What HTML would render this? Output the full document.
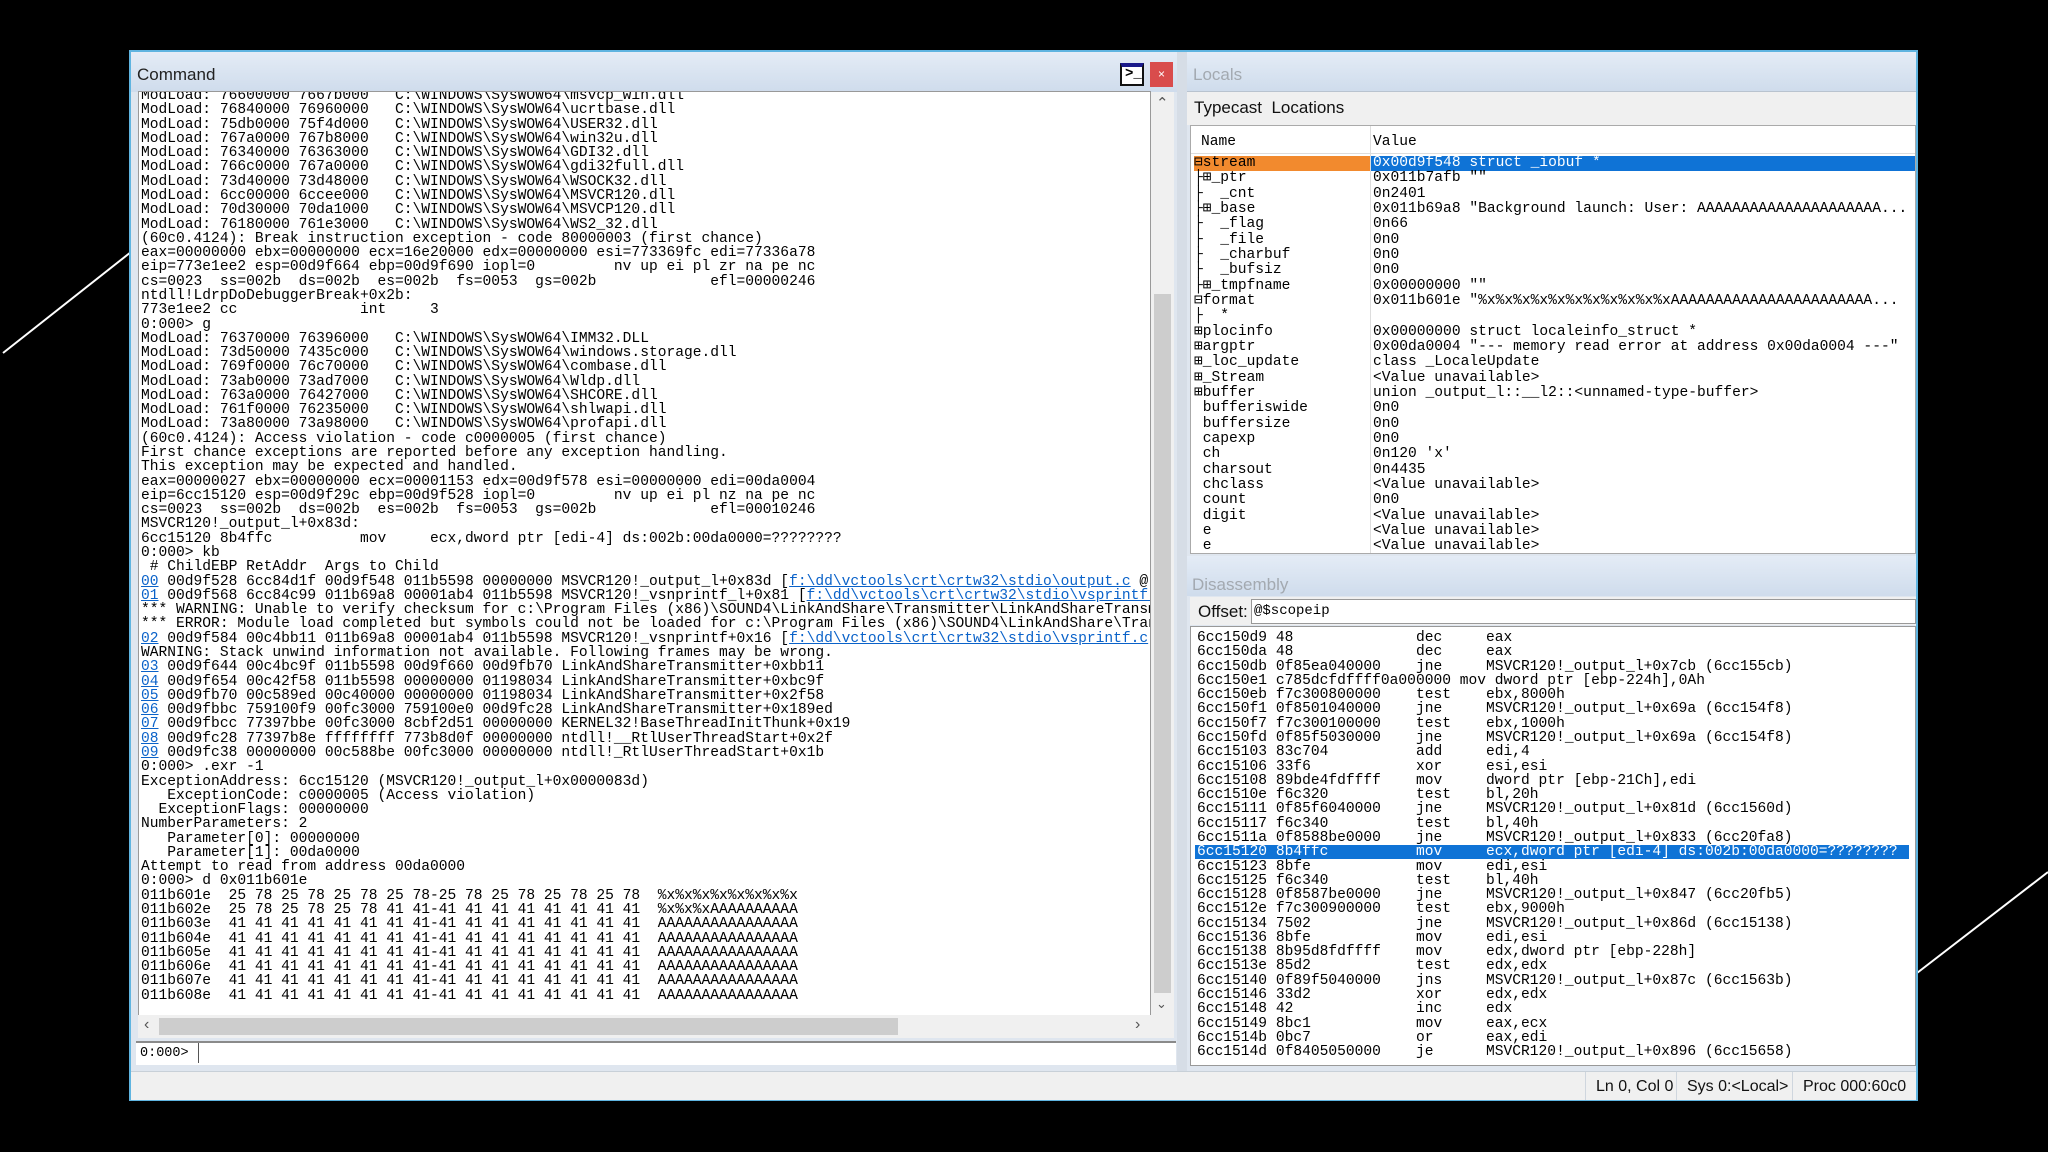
<!DOCTYPE html>
<html><head><meta charset="utf-8">
<style>
*{margin:0;padding:0;box-sizing:border-box}
body{width:2048px;height:1152px;background:#000;position:relative;overflow:hidden;font-family:"Liberation Sans",sans-serif}
.abs{position:absolute}
.mono{font-family:"Liberation Mono",monospace;font-size:14.6px;white-space:pre;color:#000}
.win{left:129px;top:50px;width:1789px;height:1051px;background:#dfe6ef;border:2px solid #5fb4e0}
.tb{background:linear-gradient(#e4ecf6,#cfdcec)}
a{color:#0a62c9;text-decoration:underline}
.st{position:absolute;top:0;height:28px;border-left:1px solid #cfd6de;padding:0 10px;line-height:30px;font-size:16px;color:#111}
</style></head><body>
<svg class="abs" style="left:0;top:0" width="2048" height="1152"><line x1="3" y1="353" x2="131" y2="252" stroke="#fff" stroke-width="2"/><line x1="1917" y1="973" x2="2048" y2="872" stroke="#fff" stroke-width="2"/></svg>
<div class="abs win"></div>
<div class="abs tb" style="left:131px;top:52px;width:1046px;height:40px"></div>
<div class="abs" style="left:137px;top:65px;font-size:17px;color:#222">Command</div>
<div class="abs" style="left:1120px;top:63px;width:24px;height:23px;background:#fff;border:2px solid #111;border-top:4px solid #1a1a8a"></div>
<div class="abs" style="left:1125px;top:66px;font-family:'Liberation Mono',monospace;font-size:14px;font-weight:bold;color:#000">&gt;_</div>
<div class="abs" style="left:1150px;top:62px;width:23px;height:25px;background:#d94c4c;color:#fff;font-size:12px;text-align:center;line-height:25px">×</div>
<div class="abs" style="left:138px;top:91px;width:1013px;height:925px;background:#fff;border:1px solid #999;overflow:hidden">
<div class="abs mono" style="left:2px;top:-3px;line-height:14.28px">ModLoad: 76600000 7667b000   C:\WINDOWS\SysWOW64\msvcp_win.dll
ModLoad: 76840000 76960000   C:\WINDOWS\SysWOW64\ucrtbase.dll
ModLoad: 75db0000 75f4d000   C:\WINDOWS\SysWOW64\USER32.dll
ModLoad: 767a0000 767b8000   C:\WINDOWS\SysWOW64\win32u.dll
ModLoad: 76340000 76363000   C:\WINDOWS\SysWOW64\GDI32.dll
ModLoad: 766c0000 767a0000   C:\WINDOWS\SysWOW64\gdi32full.dll
ModLoad: 73d40000 73d48000   C:\WINDOWS\SysWOW64\WSOCK32.dll
ModLoad: 6cc00000 6ccee000   C:\WINDOWS\SysWOW64\MSVCR120.dll
ModLoad: 70d30000 70da1000   C:\WINDOWS\SysWOW64\MSVCP120.dll
ModLoad: 76180000 761e3000   C:\WINDOWS\SysWOW64\WS2_32.dll
(60c0.4124): Break instruction exception - code 80000003 (first chance)
eax=00000000 ebx=00000000 ecx=16e20000 edx=00000000 esi=773369fc edi=77336a78
eip=773e1ee2 esp=00d9f664 ebp=00d9f690 iopl=0         nv up ei pl zr na pe nc
cs=0023  ss=002b  ds=002b  es=002b  fs=0053  gs=002b             efl=00000246
ntdll!LdrpDoDebuggerBreak+0x2b:
773e1ee2 cc              int     3
0:000> g
ModLoad: 76370000 76396000   C:\WINDOWS\SysWOW64\IMM32.DLL
ModLoad: 73d50000 7435c000   C:\WINDOWS\SysWOW64\windows.storage.dll
ModLoad: 769f0000 76c70000   C:\WINDOWS\SysWOW64\combase.dll
ModLoad: 73ab0000 73ad7000   C:\WINDOWS\SysWOW64\Wldp.dll
ModLoad: 763a0000 76427000   C:\WINDOWS\SysWOW64\SHCORE.dll
ModLoad: 761f0000 76235000   C:\WINDOWS\SysWOW64\shlwapi.dll
ModLoad: 73a80000 73a98000   C:\WINDOWS\SysWOW64\profapi.dll
(60c0.4124): Access violation - code c0000005 (first chance)
First chance exceptions are reported before any exception handling.
This exception may be expected and handled.
eax=00000027 ebx=00000000 ecx=00001153 edx=00d9f578 esi=00000000 edi=00da0004
eip=6cc15120 esp=00d9f29c ebp=00d9f528 iopl=0         nv up ei pl nz na pe nc
cs=0023  ss=002b  ds=002b  es=002b  fs=0053  gs=002b             efl=00010246
MSVCR120!_output_l+0x83d:
6cc15120 8b4ffc          mov     ecx,dword ptr [edi-4] ds:002b:00da0000=????????
0:000> kb
 # ChildEBP RetAddr  Args to Child
<a>00</a> 00d9f528 6cc84d1f 00d9f548 011b5598 00000000 MSVCR120!_output_l+0x83d [<a>f:\dd\vctools\crt\crtw32\stdio\output.c</a> @ 1649]
<a>01</a> 00d9f568 6cc84c99 011b69a8 00001ab4 011b5598 MSVCR120!_vsnprintf_l+0x81 [<a>f:\dd\vctools\crt\crtw32\stdio\vsprintf.c</a> @ 139]
*** WARNING: Unable to verify checksum for c:\Program Files (x86)\SOUND4\LinkAndShare\Transmitter\LinkAndShareTransmitter.exe
*** ERROR: Module load completed but symbols could not be loaded for c:\Program Files (x86)\SOUND4\LinkAndShare\Transmitter
<a>02</a> 00d9f584 00c4bb11 011b69a8 00001ab4 011b5598 MSVCR120!_vsnprintf+0x16 [<a>f:\dd\vctools\crt\crtw32\stdio\vsprintf.c</a> @ 190]
WARNING: Stack unwind information not available. Following frames may be wrong.
<a>03</a> 00d9f644 00c4bc9f 011b5598 00d9f660 00d9fb70 LinkAndShareTransmitter+0xbb11
<a>04</a> 00d9f654 00c42f58 011b5598 00000000 01198034 LinkAndShareTransmitter+0xbc9f
<a>05</a> 00d9fb70 00c589ed 00c40000 00000000 01198034 LinkAndShareTransmitter+0x2f58
<a>06</a> 00d9fbbc 759100f9 00fc3000 759100e0 00d9fc28 LinkAndShareTransmitter+0x189ed
<a>07</a> 00d9fbcc 77397bbe 00fc3000 8cbf2d51 00000000 KERNEL32!BaseThreadInitThunk+0x19
<a>08</a> 00d9fc28 77397b8e ffffffff 773b8d0f 00000000 ntdll!__RtlUserThreadStart+0x2f
<a>09</a> 00d9fc38 00000000 00c588be 00fc3000 00000000 ntdll!_RtlUserThreadStart+0x1b
0:000> .exr -1
ExceptionAddress: 6cc15120 (MSVCR120!_output_l+0x0000083d)
   ExceptionCode: c0000005 (Access violation)
  ExceptionFlags: 00000000
NumberParameters: 2
   Parameter[0]: 00000000
   Parameter[1]: 00da0000
Attempt to read from address 00da0000
0:000> d 0x011b601e
011b601e  25 78 25 78 25 78 25 78-25 78 25 78 25 78 25 78  %x%x%x%x%x%x%x%x
011b602e  25 78 25 78 25 78 41 41-41 41 41 41 41 41 41 41  %x%x%xAAAAAAAAAA
011b603e  41 41 41 41 41 41 41 41-41 41 41 41 41 41 41 41  AAAAAAAAAAAAAAAA
011b604e  41 41 41 41 41 41 41 41-41 41 41 41 41 41 41 41  AAAAAAAAAAAAAAAA
011b605e  41 41 41 41 41 41 41 41-41 41 41 41 41 41 41 41  AAAAAAAAAAAAAAAA
011b606e  41 41 41 41 41 41 41 41-41 41 41 41 41 41 41 41  AAAAAAAAAAAAAAAA
011b607e  41 41 41 41 41 41 41 41-41 41 41 41 41 41 41 41  AAAAAAAAAAAAAAAA
011b608e  41 41 41 41 41 41 41 41-41 41 41 41 41 41 41 41  AAAAAAAAAAAAAAAA</div>
<div class="abs" style="left:1011px;top:0;width:2px;height:925px;background:#fff"></div>
</div>
<div class="abs" style="left:1151px;top:92px;width:23px;height:923px;background:#f0f0f0"></div>
<div class="abs" style="left:1154px;top:294px;width:17px;height:699px;background:#cdcdcd"></div>
<div class="abs" style="left:1156px;top:94px;font-size:15px;color:#555">&#8963;</div>
<div class="abs" style="left:1156px;top:996px;font-size:13px;color:#555">&#8964;</div>
<div class="abs" style="left:138px;top:1015px;width:1036px;height:23px;background:#f0f0f0"></div>
<div class="abs" style="left:159px;top:1018px;width:739px;height:17px;background:#cdcdcd"></div>
<div class="abs" style="left:144px;top:1016px;font-size:16px;color:#555">&#8249;</div>
<div class="abs" style="left:1135px;top:1016px;font-size:16px;color:#555">&#8250;</div>
<div class="abs" style="left:136px;top:1041px;width:1040px;height:24px;background:#fff;border-top:2px solid #8a8a8a"></div>
<div class="abs mono" style="left:140px;top:1046px;font-size:13.5px;line-height:16px">0:000&gt;</div>
<div class="abs" style="left:198px;top:1043px;width:1px;height:20px;background:#555"></div>
<div class="abs" style="left:1177px;top:52px;width:10px;height:1020px;background:#d6dde6"></div>
<div class="abs tb" style="left:1187px;top:52px;width:729px;height:39px"></div>
<div class="abs" style="left:1193px;top:65px;font-size:17px;color:#a3a9b0">Locals</div>
<div class="abs" style="left:1187px;top:91px;width:729px;height:34px;background:#f0f0f0;border-top:1px solid #b9c3cf"></div>
<div class="abs" style="left:1194px;top:98px;font-size:17px;color:#111">Typecast&nbsp;&nbsp;Locations</div>
<div class="abs" style="left:1190px;top:125px;width:726px;height:429px;background:#fff;border:1px solid #aaa;overflow:hidden">
<div class="abs" style="left:0;top:0;right:0;height:28px;border-bottom:1px solid #ddd"></div>
<div class="abs" style="left:179px;top:0;width:1px;height:429px;background:#ddd"></div>
<div class="abs mono" style="left:10px;top:8px;font-size:14.6px">Name</div>
<div class="abs mono" style="left:182px;top:8px;font-size:14.6px">Value</div>
<div class="abs" style="left:3px;top:30px;width:176px;height:15px;background:#f28a2e"></div>
<div class="abs" style="left:180px;top:30px;width:546px;height:15px;background:#0f73d6"></div>
<div class="abs mono" style="left:3px;top:30px;line-height:15.33px">&#8863;stream
&#9500;&#8862;_ptr
&#9500;  _cnt
&#9500;&#8862;_base
&#9500;  _flag
&#9500;  _file
&#9500;  _charbuf
&#9500;  _bufsiz
&#9500;&#8862;_tmpfname
&#8863;format
&#9500;  *
&#8862;plocinfo
&#8862;argptr
&#8862;_loc_update
&#8862;_Stream
&#8862;buffer
 bufferiswide
 buffersize
 capexp
 ch
 charsout
 chclass
 count
 digit
 e
 e</div>
<div class="abs mono" style="left:182px;top:30px;line-height:15.33px"><span style="color:#fff">0x00d9f548 struct _iobuf *</span>
0x011b7afb ""
0n2401
0x011b69a8 "Background launch: User: AAAAAAAAAAAAAAAAAAAAA...
0n66
0n0
0n0
0n0
0x00000000 ""
0x011b601e "%x%x%x%x%x%x%x%x%x%x%xAAAAAAAAAAAAAAAAAAAAAAA...

0x00000000 struct localeinfo_struct *
0x00da0004 "--- memory read error at address 0x00da0004 ---"
class _LocaleUpdate
&lt;Value unavailable&gt;
union _output_l::__l2::&lt;unnamed-type-buffer&gt;
0n0
0n0
0n0
0n120 'x'
0n4435
&lt;Value unavailable&gt;
0n0
&lt;Value unavailable&gt;
&lt;Value unavailable&gt;
&lt;Value unavailable&gt;</div>
</div>
<div class="abs tb" style="left:1187px;top:556px;width:729px;height:40px"></div>
<div class="abs" style="left:1192px;top:575px;font-size:17px;color:#a3a9b0">Disassembly</div>
<div class="abs" style="left:1190px;top:597px;width:726px;height:28px;background:#f0f0f0"></div>
<div class="abs" style="left:1198px;top:602px;font-size:17px;color:#111">Offset:</div>
<div class="abs" style="left:1251px;top:599px;width:665px;height:25px;background:#fff;border:1px solid #999"></div>
<div class="abs mono" style="left:1254px;top:603px;font-size:14px">@$scopeip</div>
<div class="abs" style="left:1190px;top:626px;width:726px;height:440px;background:#fff;border:1px solid #999;overflow:hidden">
<div class="abs" style="left:4px;top:218px;width:714px;height:14px;background:#0f73d6"></div>
<div class="abs mono" style="left:6px;top:4px;line-height:14.28px">6cc150d9 48              dec     eax
6cc150da 48              dec     eax
6cc150db 0f85ea040000    jne     MSVCR120!_output_l+0x7cb (6cc155cb)
6cc150e1 c785dcfdffff0a000000 mov dword ptr [ebp-224h],0Ah
6cc150eb f7c300800000    test    ebx,8000h
6cc150f1 0f8501040000    jne     MSVCR120!_output_l+0x69a (6cc154f8)
6cc150f7 f7c300100000    test    ebx,1000h
6cc150fd 0f85f5030000    jne     MSVCR120!_output_l+0x69a (6cc154f8)
6cc15103 83c704          add     edi,4
6cc15106 33f6            xor     esi,esi
6cc15108 89bde4fdffff    mov     dword ptr [ebp-21Ch],edi
6cc1510e f6c320          test    bl,20h
6cc15111 0f85f6040000    jne     MSVCR120!_output_l+0x81d (6cc1560d)
6cc15117 f6c340          test    bl,40h
6cc1511a 0f8588be0000    jne     MSVCR120!_output_l+0x833 (6cc20fa8)
<span style="color:#fff">6cc15120 8b4ffc          mov     ecx,dword ptr [edi-4] ds:002b:00da0000=????????</span>
6cc15123 8bfe            mov     edi,esi
6cc15125 f6c340          test    bl,40h
6cc15128 0f8587be0000    jne     MSVCR120!_output_l+0x847 (6cc20fb5)
6cc1512e f7c300900000    test    ebx,9000h
6cc15134 7502            jne     MSVCR120!_output_l+0x86d (6cc15138)
6cc15136 8bfe            mov     edi,esi
6cc15138 8b95d8fdffff    mov     edx,dword ptr [ebp-228h]
6cc1513e 85d2            test    edx,edx
6cc15140 0f89f5040000    jns     MSVCR120!_output_l+0x87c (6cc1563b)
6cc15146 33d2            xor     edx,edx
6cc15148 42              inc     edx
6cc15149 8bc1            mov     eax,ecx
6cc1514b 0bc7            or      eax,edi
6cc1514d 0f8405050000    je      MSVCR120!_output_l+0x896 (6cc15658)</div>
</div>
<div class="abs" style="left:131px;top:1071px;width:1785px;height:29px;background:#f0f0f0;border-top:1px solid #c8d0d8"></div>
<div class="abs" style="left:1585px;top:1072px;width:332px;height:28px">
<div class="st" style="left:0">Ln 0, Col 0</div>
<div class="st" style="left:91px">Sys 0:&lt;Local&gt;</div>
<div class="st" style="left:207px">Proc 000:60c0</div>
</div>
</body></html>
